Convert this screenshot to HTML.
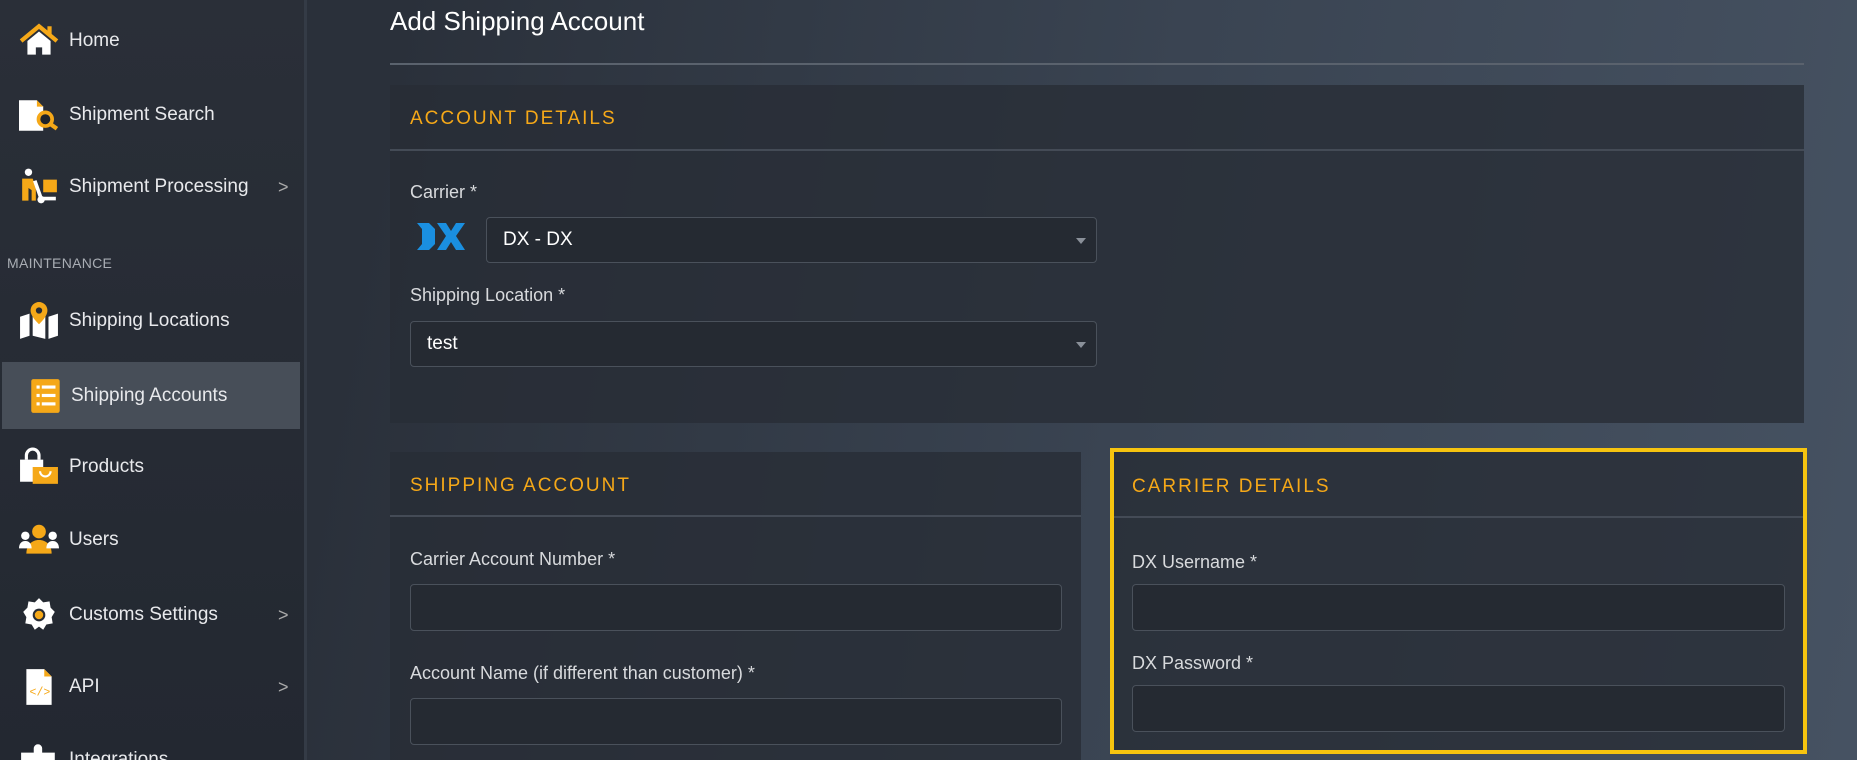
<!DOCTYPE html>
<html style="overflow:hidden;height:760px"><head><meta charset="utf-8"><style>
*{box-sizing:border-box;margin:0;padding:0}
body{width:1857px;height:760px;overflow:hidden;font-family:"Liberation Sans Narrow","Liberation Sans",sans-serif;background:linear-gradient(100deg,#2a303a 20%,#3a4452 60%,#465262 100%);position:relative;color:#e6e8eb}
.sb{position:absolute;left:0;top:0;width:307px;height:760px;overflow:hidden;background:linear-gradient(180deg,#2a2f38,#232831);border-right:3px solid #343b46}
.it{position:absolute;left:0;width:300px;height:60px;display:flex;align-items:center;font-size:19px;color:#e8e9ec}
.it svg{position:absolute;left:19px;width:40px;height:40px}
.it span{position:absolute;left:69px}
.it .ar{left:278px;color:#aaa;font-size:18px}
.act{background:#474e58;left:2px;width:298px;height:67px}
.mt{position:absolute;left:7px;top:255px;font-size:14px;color:#a9adb4;font-family:"Liberation Sans",sans-serif;letter-spacing:.3px}
.ab{position:absolute}
h1{position:absolute;left:390px;top:6px;font-weight:normal;font-size:26px;color:#fff}
.hr{position:absolute;left:390px;top:63px;width:1414px;height:2px;background:#5a626d}
.card{position:absolute;background:rgba(40,45,54,.8);overflow:hidden}
.hd{position:absolute;left:20px;font-size:19px;letter-spacing:2px;color:#f5a818}
.dv{position:absolute;left:0;right:0;height:2px;background:#444b56}
.lb{position:absolute;font-size:18px;color:#d8dadd}
.in{position:absolute;background:#252a32;border:1px solid #4a515b;border-radius:4px;font-size:19px;color:#fff;padding-left:16px;display:flex;align-items:center}
.in .c{position:absolute;right:10px;top:50%;margin-top:-2px;border:5px solid transparent;border-top:6px solid #8a9099;border-bottom:0}
</style></head><body>
<div class="sb">
<div class="it" style="top:11px"><svg viewBox="0 0 38 38"><path d="M2 19L19 5l17 14" fill="none" stroke="#f5a818" stroke-width="4"/><path d="M8 19v13h8v-7h6v7h8V19L19 10z" fill="#fff"/><rect x="27" y="5" width="4" height="8" fill="#f5a818"/></svg><span>Home</span></div>
<div class="it" style="top:85px"><svg viewBox="0 0 38 38"><path d="M0 5h17l6 6v23H0z" fill="#fff"/><path d="M17 5l6 6h-6z" fill="#f5a818"/><circle cx="25" cy="23" r="6.5" fill="#1f242c" stroke="#f5a818" stroke-width="3.5"/><path d="M29 27l7 5" stroke="#f5a818" stroke-width="4"/></svg><span>Shipment Search</span></div>
<div class="it" style="top:157px"><svg viewBox="0 0 38 38"><circle cx="9" cy="5" r="3.5" fill="#fff"/><path d="M3 11h10l3 8v13h-4V22l-3-2v12H3z" fill="#f5a818"/><path d="M15 13l6 17h14" stroke="#fff" stroke-width="3.5" fill="none"/><rect x="23" y="12" width="13" height="12" fill="#f5a818"/><circle cx="21" cy="31" r="3.5" fill="#fff"/></svg><span>Shipment Processing</span><span class="ar">&gt;</span></div>
<div class="mt">MAINTENANCE</div>
<div class="it" style="top:291px"><svg viewBox="0 0 38 38"><path d="M1 15l9-3v21l-9 3zM13 12l12 3v21l-12-3zM28 15l9-3v21l-9 3z" fill="#fff"/><path d="M19 1a8 8 0 018 8c0 6-8 13-8 13s-8-7-8-13a8 8 0 018-8z" fill="#f5a818"/><circle cx="19" cy="9" r="3" fill="#272c35"/></svg><span>Shipping Locations</span></div>
<div class="it act" style="top:362px"><svg viewBox="0 0 38 38" style="left:24px"><rect x="5" y="3" width="27" height="32" rx="2" fill="#f5a818"/><rect x="10" y="9" width="3" height="3" fill="#fff"/><rect x="15" y="9" width="13" height="3" fill="#fff"/><rect x="10" y="17" width="3" height="3" fill="#fff"/><rect x="15" y="17" width="13" height="3" fill="#fff"/><rect x="10" y="25" width="3" height="3" fill="#fff"/><rect x="15" y="25" width="13" height="3" fill="#fff"/></svg><span>Shipping Accounts</span></div>
<div class="it" style="top:437px"><svg viewBox="0 0 38 38"><rect x="1" y="12" width="22" height="21" fill="#fff"/><path d="M7 12V8a6 6 0 0112 0v4" fill="none" stroke="#fff" stroke-width="3"/><rect x="13" y="19" width="24" height="16" fill="#f5a818"/><path d="M20 23a5 5 0 0010 0" fill="none" stroke="#fff" stroke-width="2"/></svg><span>Products</span></div>
<div class="it" style="top:510px"><svg viewBox="0 0 38 38"><circle cx="19" cy="11" r="6.5" fill="#f5a818"/><path d="M7 32c0-8 5-13 12-13s12 5 12 13z" fill="#f5a818"/><circle cx="6" cy="15" r="4" fill="#fff"/><circle cx="32" cy="15" r="4" fill="#fff"/><path d="M0 27c0-4 2-7 6-7s6 3 6 7zM26 27c0-4 2-7 6-7s6 3 6 7z" fill="#fff"/></svg><span>Users</span></div>
<div class="it" style="top:585px"><svg viewBox="0 0 38 38"><path d="M19 3l4 4 6-1 1 6 4 4-3 5 1 6-6 1-3 5-4-3-4 3-3-5-6-1 1-6-3-5 4-4 1-6 6 1z" fill="#fff"/><circle cx="19" cy="19" r="6" fill="#272c35"/><circle cx="19" cy="19" r="4" fill="#f5a818"/></svg><span>Customs Settings</span><span class="ar">&gt;</span></div>
<div class="it" style="top:657px"><svg viewBox="0 0 38 38"><path d="M7 2h17l7 7v27H7z" fill="#fff"/><path d="M24 2l7 7h-7z" fill="#f5a818"/><text x="10" y="27" font-size="11" fill="#f5a818" font-family="Liberation Mono">&lt;/&gt;</text></svg><span>API</span><span class="ar">&gt;</span></div>
<div class="it" style="top:730px"><svg viewBox="0 0 38 38"><path d="M2 12h12v-4a4 4 0 018 0v4h12v26H2z" fill="#fff"/></svg><span>Integrations</span></div>
</div>
<h1>Add Shipping Account</h1>
<div class="hr"></div>
<div class="card" style="left:390px;top:85px;width:1414px;height:338px">
<div class="hd" style="top:23px">ACCOUNT DETAILS</div><div class="dv" style="top:64px"></div>
<div class="lb" style="left:20px;top:97px">Carrier *</div>
<svg class="ab" style="left:27px;top:138px" width="48" height="27" viewBox="0 0 48 27"><path d="M0 0h12l6 6v15l-6 6H0l5-6V6z" fill="#1a8fe0"/><path d="M20 0h9l5 8 5-8h9l-9 13 9 14h-9l-5-8-5 8h-9l9-14z" fill="#1a8fe0"/></svg>
<div class="in" style="left:96px;top:132px;width:611px;height:46px">DX - DX<i class="c"></i></div>
<div class="lb" style="left:20px;top:200px">Shipping Location *</div>
<div class="in" style="left:20px;top:236px;width:687px;height:46px">test<i class="c"></i></div>
</div>
<div class="card" style="left:390px;top:452px;width:691px;height:308px">
<div class="hd" style="top:23px">SHIPPING ACCOUNT</div><div class="dv" style="top:63px"></div>
<div class="lb" style="left:20px;top:97px">Carrier Account Number *</div>
<div class="in" style="left:20px;top:132px;width:652px;height:47px"></div>
<div class="lb" style="left:20px;top:211px">Account Name (if different than customer) *</div>
<div class="in" style="left:20px;top:246px;width:652px;height:47px"></div>
</div>
<div class="card" style="left:1110px;top:448px;width:697px;height:306px;border:4px solid #f6c40f">
<div class="hd" style="top:24px;left:18px">CARRIER DETAILS</div><div class="dv" style="top:64px"></div>
<div class="lb" style="left:18px;top:100px">DX Username *</div>
<div class="in" style="left:18px;top:132px;width:653px;height:47px"></div>
<div class="lb" style="left:18px;top:201px">DX Password *</div>
<div class="in" style="left:18px;top:233px;width:653px;height:47px"></div>
</div>
</body></html>
